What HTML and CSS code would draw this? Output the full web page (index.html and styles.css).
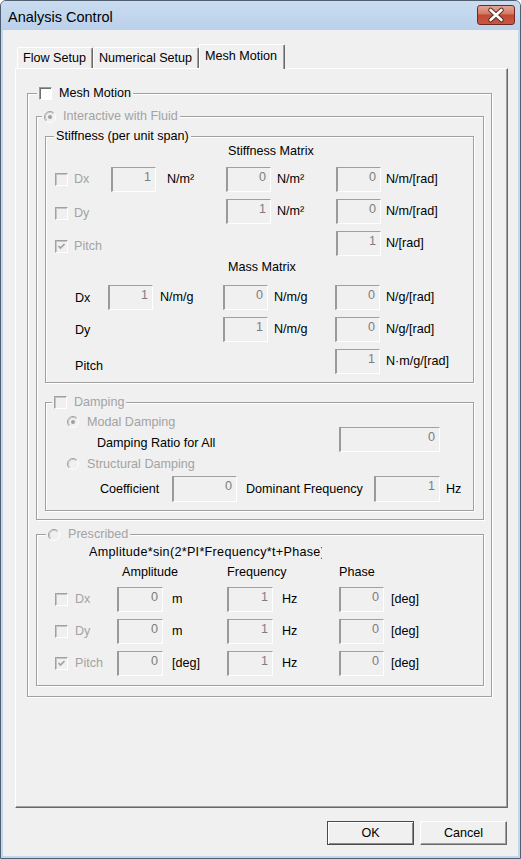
FILE: index.html
```html
<!DOCTYPE html>
<html>
<head>
<meta charset="utf-8">
<title>Analysis Control</title>
<link rel="stylesheet" href="styles.css">
</head>
<body>
<div class="window">
  <div class="titlebar">
    <span class="title">Analysis Control</span>
    <div class="close">
      <svg width="36" height="18" viewBox="0 0 36 18">
        <path d="M12.5 4 L23.5 14 M23.5 4 L12.5 14" stroke="#5a2a24" stroke-width="4.6" stroke-linecap="round"/>
        <path d="M12.5 4 L23.5 14 M23.5 4 L12.5 14" stroke="#ffffff" stroke-width="2.6" stroke-linecap="round"/>
      </svg>
    </div>
  </div>
  <div class="client">
    <div class="tabs">
      <div class="tab t-flow">Flow Setup</div>
      <div class="tab t-num">Numerical Setup</div>
      <div class="tab t-mesh active">Mesh Motion</div>
    </div>
    <div class="panel">
      <div class="group g-mesh">
        <div class="legend l-mesh"><span class="cb enabled"></span><span>Mesh Motion</span></div>

        <div class="group g-inter">
          <div class="legend l-inter">
            <svg class="radio" width="12" height="12" viewBox="0 0 12 12">
              <circle cx="6" cy="6" r="5.5" fill="#f0f0f0"/>
              <path d="M2.1 9.9 A5.5 5.5 0 0 1 9.9 2.1" fill="none" stroke="#a0a0a0"/>
              <path d="M9.9 2.1 A5.5 5.5 0 0 1 2.1 9.9" fill="none" stroke="#ffffff"/>
              <path d="M2.8 9.2 A4.5 4.5 0 0 1 9.2 2.8" fill="none" stroke="#c4c4c4"/>
              <circle cx="6" cy="6" r="2" fill="#a0a0a0"/>
            </svg>
            <span class="dis">Interactive with Fluid</span>
          </div>

          <div class="group g-stiff">
            <div class="legend l-stiff"><span>Stiffness (per unit span)</span></div>
            <div class="mtitle">Stiffness Matrix</div>
            <div class="sgrid">
              <div class="chk"><span class="cb"></span><span class="dis">Dx</span></div>
              <div class="in">1</div>
              <div class="u s1">N/m²</div>
              <div class="in">0</div>
              <div class="u s2">N/m²</div>
              <div class="in">0</div>
              <div class="u s3">N/m/[rad]</div>

              <div class="chk c2"><span class="cb"></span><span class="dis">Dy</span></div>
              <div></div>
              <div></div>
              <div class="in">1</div>
              <div class="u s2">N/m²</div>
              <div class="in">0</div>
              <div class="u s3">N/m/[rad]</div>

              <div class="chk c3"><span class="cb"><svg width="11" height="11" viewBox="0 0 11 11"><path d="M2.5 5 L4.5 7 L8.5 3" fill="none" stroke="#a0a0a0" stroke-width="1.6"/></svg></span><span class="dis">Pitch</span></div>
              <div></div>
              <div></div>
              <div></div>
              <div></div>
              <div class="in">1</div>
              <div class="u s3">N/[rad]</div>
            </div>

            <div class="mtitle mass">Mass Matrix</div>
            <div class="mgrid">
              <div class="lab">Dx</div>
              <div class="in">1</div>
              <div class="u m1">N/m/g</div>
              <div class="in">0</div>
              <div class="u m2">N/m/g</div>
              <div class="in">0</div>
              <div class="u m3">N/g/[rad]</div>

              <div class="lab">Dy</div>
              <div></div>
              <div></div>
              <div class="in">1</div>
              <div class="u m2">N/m/g</div>
              <div class="in">0</div>
              <div class="u m3">N/g/[rad]</div>

              <div class="lab l3">Pitch</div>
              <div></div>
              <div></div>
              <div></div>
              <div></div>
              <div class="in">1</div>
              <div class="u m3">N·m/g/[rad]</div>
            </div>
          </div>

          <div class="group g-damp">
            <div class="legend l-damp"><span class="cb"></span><span class="dis">Damping</span></div>
            <div class="rrow r-modal">
              <svg class="radio" width="12" height="12" viewBox="0 0 12 12">
                <circle cx="6" cy="6" r="5.5" fill="#f0f0f0"/>
                <path d="M2.1 9.9 A5.5 5.5 0 0 1 9.9 2.1" fill="none" stroke="#a0a0a0"/>
                <path d="M9.9 2.1 A5.5 5.5 0 0 1 2.1 9.9" fill="none" stroke="#ffffff"/>
                <path d="M2.8 9.2 A4.5 4.5 0 0 1 9.2 2.8" fill="none" stroke="#c4c4c4"/>
                <circle cx="6" cy="6" r="2" fill="#a0a0a0"/>
              </svg>
              <span class="dis">Modal Damping</span>
            </div>
            <div class="ratio-row">
              <span class="ratio-lab">Damping Ratio for All</span>
              <div class="in w101">0</div>
            </div>
            <div class="rrow r-struct">
              <svg class="radio" width="12" height="12" viewBox="0 0 12 12">
                <circle cx="6" cy="6" r="5.5" fill="#f0f0f0"/>
                <path d="M2.1 9.9 A5.5 5.5 0 0 1 9.9 2.1" fill="none" stroke="#a0a0a0"/>
                <path d="M9.9 2.1 A5.5 5.5 0 0 1 2.1 9.9" fill="none" stroke="#ffffff"/>
                <path d="M2.8 9.2 A4.5 4.5 0 0 1 9.2 2.8" fill="none" stroke="#c4c4c4"/>
              </svg>
              <span class="dis">Structural Damping</span>
            </div>
            <div class="coef-row">
              <span class="coef-lab">Coefficient</span>
              <div class="in w65">0</div>
              <span class="dom-lab">Dominant Frequency</span>
              <div class="in w66">1</div>
              <span class="hz">Hz</span>
            </div>
          </div>
        </div>

        <div class="group g-pres">
          <div class="legend l-pres">
            <svg class="radio" width="12" height="12" viewBox="0 0 12 12">
              <circle cx="6" cy="6" r="5.5" fill="#f0f0f0"/>
              <path d="M2.1 9.9 A5.5 5.5 0 0 1 9.9 2.1" fill="none" stroke="#a0a0a0"/>
              <path d="M9.9 2.1 A5.5 5.5 0 0 1 2.1 9.9" fill="none" stroke="#ffffff"/>
              <path d="M2.8 9.2 A4.5 4.5 0 0 1 9.2 2.8" fill="none" stroke="#c4c4c4"/>
            </svg>
            <span class="dis">Prescribed</span>
          </div>
          <div class="formula">Amplitude*sin(2*PI*Frequency*t+Phase)</div>
          <div class="pgrid">
            <div></div>
            <div class="hd h-amp">Amplitude</div>
            <div></div>
            <div class="hd">Frequency</div>
            <div></div>
            <div class="hd">Phase</div>
            <div></div>

            <div class="chk"><span class="cb"></span><span class="dis">Dx</span></div>
            <div class="in">0</div>
            <div class="u p1">m</div>
            <div class="in">1</div>
            <div class="u p2">Hz</div>
            <div class="in">0</div>
            <div class="u p3">[deg]</div>

            <div class="chk"><span class="cb"></span><span class="dis">Dy</span></div>
            <div class="in">0</div>
            <div class="u p1">m</div>
            <div class="in">1</div>
            <div class="u p2">Hz</div>
            <div class="in">0</div>
            <div class="u p3">[deg]</div>

            <div class="chk"><span class="cb"><svg width="11" height="11" viewBox="0 0 11 11"><path d="M2.5 5 L4.5 7 L8.5 3" fill="none" stroke="#a0a0a0" stroke-width="1.6"/></svg></span><span class="dis">Pitch</span></div>
            <div class="in">0</div>
            <div class="u p1">[deg]</div>
            <div class="in">1</div>
            <div class="u p2">Hz</div>
            <div class="in">0</div>
            <div class="u p3">[deg]</div>
          </div>
        </div>
      </div>
    </div>
    <div class="buttons">
      <button class="btn default">OK</button>
      <button class="btn">Cancel</button>
    </div>
  </div>
</div>
</body>
</html>
```

FILE: styles.css
```css
* { box-sizing: border-box; }
html, body { margin: 0; padding: 0; }
body {
  width: 521px;
  height: 859px;
  overflow: hidden;
  background: #ffffff;
  font-family: "Liberation Sans", Arial, sans-serif;
  font-size: 12.6px;
  line-height: 15px;
  color: #000;
}
.window {
  width: 521px;
  height: 859px;
  border: 1px solid #4f5f70;
  border-radius: 6px 6px 0 0;
  background: #c2d6ec;
  display: flex;
  flex-direction: column;
}
.titlebar {
  height: 29px;
  flex: none;
  display: flex;
  justify-content: space-between;
  align-items: flex-start;
  background: linear-gradient(#cadcf0, #bad1ea);
  border-radius: 5px 5px 0 0;
}
.title {
  font-size: 14.5px;
  line-height: 18px;
  margin: 7px 0 0 7px;
  color: #000;
}
.close {
  width: 38px;
  height: 20px;
  margin: 4px 5px 0 0;
  border: 1px solid #6e2a22;
  border-radius: 3px;
  background: linear-gradient(#e6a596 0%, #d57a66 42%, #c04a35 52%, #c9573f 100%);
  display: flex;
  align-items: center;
  justify-content: center;
}
.client {
  flex: 1;
  margin: 0 2px 2px 2px;
  background: #f0f0f0;
  padding-top: 14px;
}
.tabs {
  display: flex;
  align-items: flex-end;
  height: 24px;
  margin-left: 14px;
  position: relative;
  z-index: 1;
}
.tab {
  height: 21px;
  border-style: solid;
  border-width: 1px 1px 0 1px;
  border-color: #ffffff #696969 transparent #ffffff;
  border-radius: 2px 2px 0 0;
  box-shadow: inset -1px 0 0 #a0a0a0;
  background: #f0f0f0;
  line-height: 19px;
  padding: 1px 0 0 5px;
  white-space: nowrap;
}
.t-flow { width: 76px; }
.t-num { width: 106px; }
.t-mesh { width: 86px; }
.tab.active {
  height: 25px;
  margin-bottom: -1px;
  padding-top: 2px;
}
.panel {
  margin-left: 12px;
  width: 493px;
  height: 740px;
  border-style: solid;
  border-width: 1px;
  border-color: #ffffff #696969 #696969 #ffffff;
  box-shadow: inset -1px -1px 0 #a0a0a0;
  padding: 24px 0 0 11px;
}
.group {
  position: relative;
  border: 1px solid #a0a0a0;
  box-shadow: inset 1px 1px 0 #ffffff, 1px 1px 0 #ffffff;
}
.legend {
  position: absolute;
  top: -8px;
  height: 15px;
  display: flex;
  align-items: center;
  gap: 7px;
  padding: 0 2px;
  background: #f0f0f0;
  white-space: nowrap;
}
.dis { color: #a3a3a3; }
.g-mesh { width: 465px; height: 604px; padding: 22px 0 0 8px; }
.l-mesh { left: 9px; }
.g-inter { width: 448px; height: 404px; padding: 19px 0 0 8px; }
.l-inter { left: 5px; }
.g-pres { width: 448px; height: 152px; margin-top: 14px; }
.l-pres { left: 9px; gap: 8px; }
.g-stiff { width: 429px; height: 247px; }
.l-stiff { left: 8px; }
.g-damp { width: 429px; height: 109px; margin-top: 19px; }
.l-damp { left: 6px; }

.cb {
  width: 13px;
  height: 13px;
  flex: none;
  border: 1px solid;
  border-color: #a0a0a0 #ffffff #ffffff #a0a0a0;
  box-shadow: inset 1px 1px 0 #c6c6c6;
  background: #f0f0f0;
  display: flex;
  align-items: center;
  justify-content: center;
}
.cb.enabled {
  background: #ffffff;
  border-color: #9a9a9a #ffffff #ffffff #9a9a9a;
  box-shadow: inset 1px 1px 0 #6f6f6f;
}
.radio { flex: none; display: block; }

.in {
  height: 25px;
  border-style: solid;
  border-width: 1px 1px 1px 2px;
  border-color: #a0a0a0 #ffffff #ffffff #9a9a9a;
  background: #f0f0f0;
  color: #7d7d7d;
  text-align: right;
  padding: 2px 4px 0 0;
  line-height: 15px;
}
.w101 { width: 101px; }
.w65 { width: 65px; }
.w66 { width: 66px; }

.mtitle { margin: 7px 0 0 182px; height: 15px; }
.mtitle.mass { margin-top: 4px; }
.sgrid, .mgrid, .pgrid {
  display: grid;
  grid-auto-rows: 25px;
  row-gap: 7px;
  align-items: center;
}
.sgrid {
  margin: 8px 0 0 9px;
  grid-template-columns: 56px 45px 70px 45px 65px 45px auto;
}
.mgrid {
  margin: 10px 0 0 9px;
  grid-template-columns: 53px 45px 70px 45px 67px 45px auto;
}
.chk { display: flex; align-items: center; gap: 6px; }
.chk.c2 { margin-top: 4px; }
.chk.c3 { margin-top: 6px; }
.u { white-space: nowrap; }
.s1 { margin-left: 11px; }
.s2 { margin-left: 6px; }
.s3 { margin-left: 5px; }
.m1 { margin-left: 7px; }
.m2 { margin-left: 6px; }
.m3 { margin-left: 6px; }
.lab { margin-left: 20px; margin-top: 2px; }
.lab.l3 { margin-top: 10px; }

.rrow { display: flex; align-items: center; gap: 8px; height: 14px; margin-left: 21px; }
.r-modal { margin-top: 12px; }
.r-struct { margin-top: 5px; }
.ratio-row { display: flex; align-items: flex-start; margin-top: -2px; padding-left: 51px; height: 25px; }
.ratio-lab { width: 242px; margin-top: 9px; }
.coef-row { display: flex; align-items: center; margin-top: 5px; padding-left: 54px; height: 26px; }
.coef-row .in { height: 26px; }
.coef-lab { width: 72px; }
.dom-lab { width: 128px; margin-left: 9px; }
.hz { margin-left: 6px; }

.formula {
  margin: 10px 0 0 52px;
  height: 15px;
  width: 233px;
  overflow: hidden;
  white-space: nowrap;
  letter-spacing: 0.3px;
}
.pgrid {
  margin: 5px 0 0 18px;
  grid-template-columns: 62px 46px 64px 46px 66px 45px auto;
  grid-template-rows: 15px 25px 25px 25px;
}
.pgrid .chk { gap: 7px; }
.hd { white-space: nowrap; }
.h-amp { margin-left: 5px; }
.p1 { margin-left: 9px; }
.p2 { margin-left: 9px; }
.p3 { margin-left: 7px; }

.buttons {
  display: flex;
  justify-content: flex-end;
  gap: 6px;
  margin-top: 13px;
  padding-right: 11px;
}
.btn {
  width: 87px;
  height: 24px;
  font-family: "Liberation Sans", Arial, sans-serif;
  font-size: 12.6px;
  color: #000;
  background: #f0f0f0;
  border: 1px solid;
  border-color: #ffffff #696969 #696969 #ffffff;
  box-shadow: inset -1px -1px 0 #a0a0a0;
  padding: 0;
}
.btn.default {
  border-color: #4a4a4a;
  box-shadow: inset 1px 1px 0 #ffffff, inset -1px -1px 0 #8a8a8a;
}
```
